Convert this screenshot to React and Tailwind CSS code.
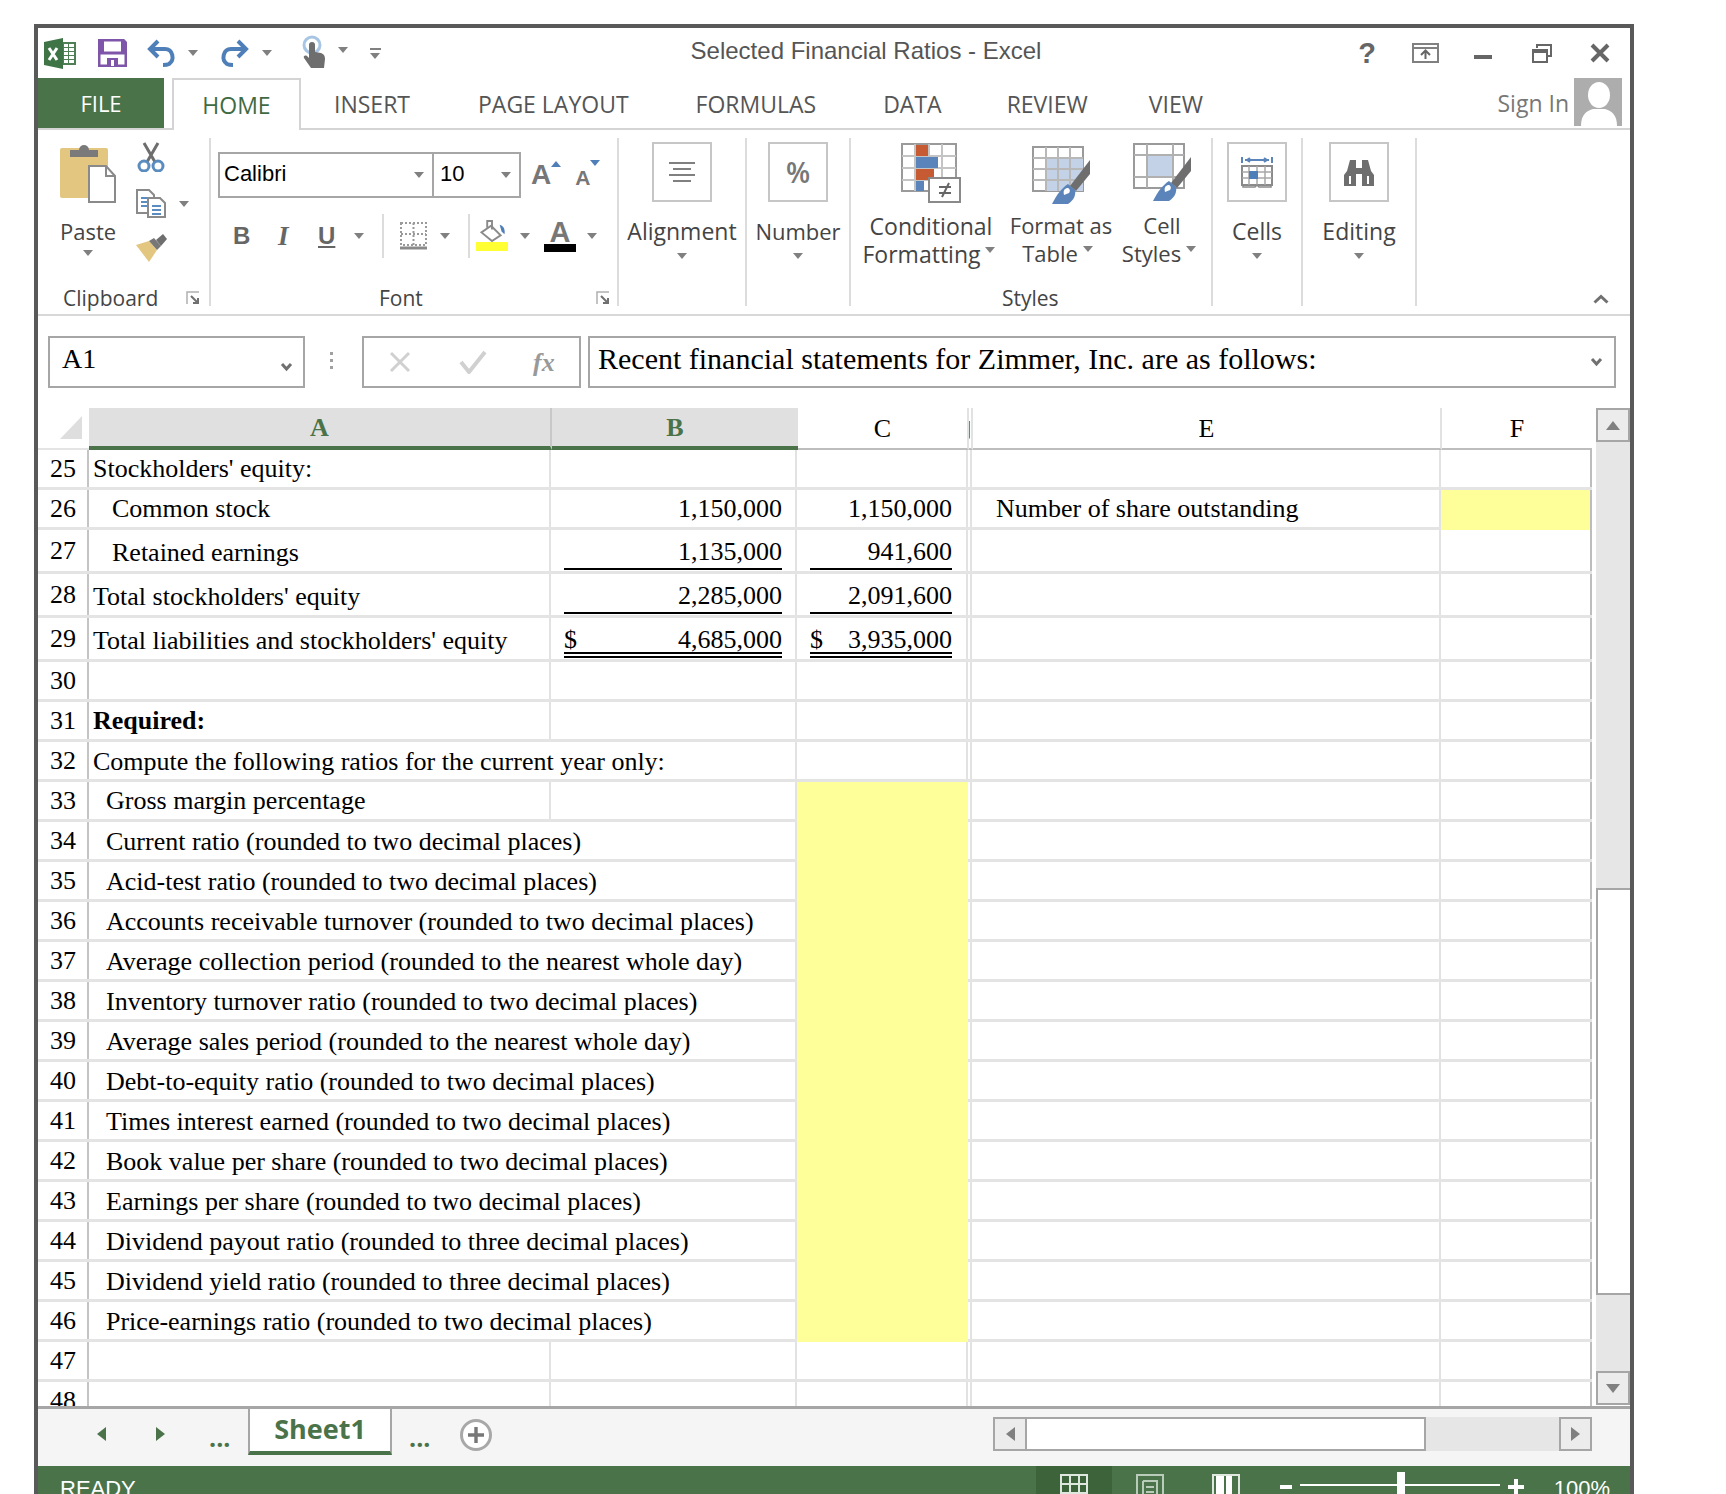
import React from "react";

const Caret = ({ up, className = "", color = "#808080" }) => (
  <svg viewBox="0 0 10 6" className={`w-[10px] h-[6px] shrink-0 ${className}`}>
    <polygon points={up ? "5,0 10,6 0,6" : "0,0 10,0 5,6"} fill={color} />
  </svg>
);

const Sep = () => <div className="w-[2px] my-[8px] bg-[#dcdcdc] shrink-0" />;

const Launcher = ({ className = "" }) => (
  <svg viewBox="0 0 14 14" className={`w-[14px] h-[14px] ${className}`}>
    <path d="M1 13V1h12" fill="none" stroke="#b0b0b0" strokeWidth="1.5" />
    <path d="M5 5l7 7M12 7v5H7" fill="none" stroke="#707070" strokeWidth="2" />
  </svg>
);

const GroupLabel = ({ text, className = "", launcher }) => (
  <div className={`mt-auto mb-[2px] h-[28px] flex items-center text-[21px] leading-[28px] ${className}`}>
    <span>{text}</span>
    {launcher}
  </div>
);

const ExcelLogo = () => (
  <svg viewBox="0 0 32 31" className="w-[32px] h-[31px]">
    <rect x="14" y="4" width="18" height="23" fill="#4f8055" />
    <g fill="#fff">
      <rect x="20" y="6" width="4" height="3" /><rect x="25" y="6" width="5" height="3" />
      <rect x="20" y="10" width="4" height="3" /><rect x="25" y="10" width="5" height="3" />
      <rect x="20" y="14" width="4" height="3" /><rect x="25" y="14" width="5" height="3" />
      <rect x="20" y="18" width="4" height="3" /><rect x="25" y="18" width="5" height="3" />
      <rect x="20" y="22" width="4" height="3" /><rect x="25" y="22" width="5" height="3" />
    </g>
    <polygon points="0,4 19,0 19,31 0,27" fill="#3f7446" />
    <path d="M5 10l8 12M13 10L5 22" stroke="#fff" strokeWidth="3" fill="none" />
  </svg>
);

const SaveIcon = () => (
  <svg viewBox="0 0 29 28" className="w-[29px] h-[28px]">
    <path d="M1 1h24l3 3v23H1z" fill="#fff" stroke="#7f55a9" strokeWidth="3" />
    <rect x="6" y="3" width="17" height="10" fill="#fff" />
    <path d="M2 14h25" stroke="#7f55a9" strokeWidth="3" />
    <rect x="2" y="2" width="4" height="12" fill="#7f55a9" />
    <rect x="23" y="2" width="4" height="12" fill="#7f55a9" />
    <path d="M9 27v-8h11v8" fill="#7f55a9" />
    <rect x="13" y="21" width="3" height="6" fill="#fff" />
  </svg>
);

const UndoIcon = ({ flip }) => (
  <svg viewBox="0 0 30 28" className={`w-[30px] h-[28px] ${flip ? "-scale-x-100" : ""}`}>
    <path
      d="M11 2L3 10l8 8M3 10h15c8 0 10 11 4 15-2 1-4 1-6 1"
      fill="none"
      stroke="#4f7fb8"
      strokeWidth="4"
    />
  </svg>
);

const TouchIcon = () => (
  <svg viewBox="0 0 24 33" className="w-[24px] h-[33px]">
    <circle cx="10" cy="10" r="8" fill="none" stroke="#a8c6e4" strokeWidth="3" />
    <path
      d="M7 10a3 3 0 0 1 6 0v7l6 1c3 1 4 3 4 6l-1 9H9L2 23c-1-2 1-3 3-2l2 2z"
      fill="#6e6e6e"
    />
  </svg>
);

const Customize = () => (
  <div className="flex flex-col items-center gap-[3px] w-[12px]">
    <div className="w-[11px] h-[2px] bg-[#808080]" />
    <Caret />
  </div>
);

const PinIcon = () => (
  <svg viewBox="0 0 27 20" className="w-[27px] h-[20px]">
    <rect x="1" y="1" width="25" height="18" fill="none" stroke="#808080" strokeWidth="2" />
    <path d="M1 5h25" stroke="#808080" strokeWidth="2" />
    <path d="M13.500 16V8M9 12l4.500-4.500L18 12" fill="none" stroke="#666" strokeWidth="2" />
  </svg>
);

const RestoreIcon = () => (
  <svg viewBox="0 0 20 19" className="w-[20px] h-[19px]">
    <path d="M5 4V1h14v11h-4" fill="none" stroke="#666" strokeWidth="2" />
    <rect x="1" y="6" width="14" height="12" fill="#fff" stroke="#666" strokeWidth="2" />
    <path d="M1 8h14" stroke="#666" strokeWidth="2" />
  </svg>
);

const CloseIcon = () => (
  <svg viewBox="0 0 20 20" className="w-[20px] h-[20px]">
    <path d="M2 2l16 16M18 2L2 18" stroke="#666" strokeWidth="4" />
  </svg>
);

const Avatar = () => (
  <svg viewBox="0 0 48 48" className="w-[48px] h-[48px] ml-[5px] shrink-0">
    <rect width="48" height="48" fill="#adadad" />
    <ellipse cx="25" cy="17" rx="11" ry="13" fill="#fff" />
    <path d="M7 48c0-12 6-15 12-17h12c6 2 12 5 12 17z" fill="#fff" />
  </svg>
);

const PasteIcon = () => (
  <svg viewBox="0 0 56 61" className="w-[56px] h-[61px]">
    <rect x="0" y="6" width="48" height="50" rx="2" fill="#e3c67f" />
    <path d="M10 8h28v7H10z" fill="#7a7a7a" />
    <path d="M19 8a5 5 0 0 1 10 0z" fill="#7a7a7a" />
    <path d="M29 24h17l9 10v26H29z" fill="#fff" stroke="#8a8a8a" strokeWidth="2" />
    <path d="M46 24v10h9" fill="none" stroke="#8a8a8a" strokeWidth="2" />
  </svg>
);

const ScissorsIcon = () => (
  <svg viewBox="0 0 30 30" className="w-[30px] h-[30px]">
    <path d="M8 1l11 19M22 1L11 20" stroke="#6e6e6e" strokeWidth="3" />
    <circle cx="8" cy="24" r="5" fill="none" stroke="#5b8cc0" strokeWidth="3" />
    <circle cx="22" cy="24" r="5" fill="none" stroke="#5b8cc0" strokeWidth="3" />
  </svg>
);

const CopyIcon = () => (
  <svg viewBox="0 0 30 29" className="w-[30px] h-[29px]">
    <path d="M1 1h12l5 5v18H1z" fill="#fff" stroke="#8a8a8a" strokeWidth="2" />
    <path d="M5 9h6M5 13h6M5 17h6" stroke="#5b8cc0" strokeWidth="2" />
    <path d="M12 9h12l5 5v14H12z" fill="#fff" stroke="#8a8a8a" strokeWidth="2" />
    <path d="M16 17h9M16 21h9M16 25h9" stroke="#5b8cc0" strokeWidth="2" />
  </svg>
);

const BrushIcon = () => (
  <svg viewBox="0 0 31 29" className="w-[31px] h-[29px]">
    <path d="M0 12L13 8l8 9-8 12z" fill="#e3c67f" />
    <path d="M13 8l5-3 7 8-4 4z" fill="#777" />
    <path d="M20 7l7-6 4 5-6 7z" fill="#6e6e6e" />
  </svg>
);

const BorderIcon = () => (
  <svg viewBox="0 0 27 28" className="w-[27px] h-[28px]">
    <path
      d="M1 1h25v22H1zM13.500 1v22M1 12h25"
      fill="none"
      stroke="#9a9a9a"
      strokeWidth="2"
      strokeDasharray="2 2"
    />
    <path d="M0 26h27" stroke="#8a8a8a" strokeWidth="3" />
  </svg>
);

const FillIcon = () => (
  <div className="flex flex-col items-center w-[32px]">
    <svg viewBox="0 0 32 24" className="w-[32px] h-[23px] -mt-[2px]">
      <path d="M15 7l10 10-9 6-11-9z" fill="#fff" stroke="#8a8a8a" strokeWidth="2" />
      <path d="M11 9V2h5v9" fill="none" stroke="#8a8a8a" strokeWidth="2" />
      <path d="M24 6c4 1 6 5 5 10l-3-3z" fill="#4f7fb8" />
    </svg>
    <div className="w-[32px] h-[9px] bg-[#ffff33]" />
  </div>
);

const ColorA = () => (
  <div className="flex flex-col items-center w-[32px]">
    <span className="[font-family:'Liberation_Sans',sans-serif] font-bold text-[29px] leading-[22px] h-[22px] text-[#777]">A</span>
    <div className="w-[32px] h-[8px] bg-black mt-[1px]" />
  </div>
);

const IconBox = ({ children }) => (
  <div className="w-[60px] h-[60px] border-2 border-[#c6c6c6] flex items-center justify-center shrink-0">
    {children}
  </div>
);

const AlignIcon = () => (
  <svg viewBox="0 0 28 22" className="w-[28px] h-[22px]">
    <path d="M1 2h26M5 8h18M1 14h26M5 20h18" stroke="#808080" strokeWidth="2" />
  </svg>
);

const CondIcon = () => (
  <svg viewBox="0 0 60 60" className="w-[60px] h-[60px]">
    <rect x="1" y="1" width="54" height="47" fill="#fff" stroke="#9a9a9a" strokeWidth="2" />
    <path d="M14 1v47M28 1v47M41 1v47M1 13h54M1 25h54M1 37h54" stroke="#c4c4c4" strokeWidth="2" />
    <rect x="15" y="2" width="12" height="11" fill="#c55a33" />
    <rect x="15" y="14" width="22" height="11" fill="#5b84ba" />
    <rect x="15" y="26" width="18" height="11" fill="#c55a33" />
    <rect x="15" y="38" width="8" height="10" fill="#5b84ba" />
    <rect x="28" y="35" width="31" height="24" fill="#fff" stroke="#8a8a8a" strokeWidth="2" />
    <path d="M38 44h12M38 50h12M41 54l7-14" stroke="#666" strokeWidth="2" fill="none" />
  </svg>
);

const TableIcon = ({ cell }) => (
  <svg viewBox="0 0 58 58" className="w-[58px] h-[58px]">
    <rect x="1" y="1" width="50" height="44" fill="#fff" stroke="#9a9a9a" strokeWidth="2" />
    {cell ? (
      <>
        <rect x="14" y="12" width="26" height="22" fill="#c3d2e7" />
        <path d="M14 1v44M40 1v44M1 12h50M1 34h50" stroke="#b0b0b0" strokeWidth="2" />
      </>
    ) : (
      <>
        <rect x="14" y="12" width="37" height="33" fill="#c3d2e7" />
        <path d="M14 1v44M26 1v44M38 1v44M1 12h50M1 23h50M1 34h50" stroke="#b8b8b8" strokeWidth="2" />
      </>
    )}
    <path d="M58 14L38 40l6 5 14-17z" fill="#6e6e6e" />
    <path d="M36 38c-6 4-11 10-16 20h16c6-4 8-9 7-14z" fill="#5b84ba" />
    <path d="M35 42c-3 1-4 3-3 7l5-2c2-3 0-5-2-5z" fill="#fff" />
  </svg>
);

const CellsIcon = () => (
  <svg viewBox="0 0 32 32" className="w-[32px] h-[32px]">
    <path d="M4 4h24" stroke="#5b84ba" strokeWidth="2" />
    <path d="M1 1v6M31 1v6M9 2l-3 2 3 2M23 2l3 2-3 2" stroke="#5b84ba" strokeWidth="2" fill="none" />
    <rect x="1" y="10" width="30" height="19" fill="#fff" stroke="#8a8a8a" strokeWidth="2" />
    <path d="M8 10v19M16 10v19M24 10v19M1 16h30M1 22h30" stroke="#a8a8a8" strokeWidth="1.500" />
    <rect x="8" y="15" width="9" height="8" fill="#4f7fb8" />
    <path d="M2 29v2h12l2-2 2 2h12v-2" fill="none" stroke="#8a8a8a" strokeWidth="1.500" />
  </svg>
);

const BinocularsIcon = () => (
  <svg viewBox="0 0 30 28" className="w-[30px] h-[28px]">
    <path
      d="M6 2h6v8h6V2h6l3 11 3 4v11H18V16h-6v12H0V17l3-4z"
      fill="#6e6e6e"
    />
    <rect x="5" y="18" width="2" height="8" fill="#fff" />
    <rect x="23" y="18" width="2" height="8" fill="#fff" />
  </svg>
);

const Chevron = ({ className = "" }) => (
  <svg viewBox="0 0 12 10" className={`w-[13px] h-[10px] ${className}`}>
    <path d="M1.500 2L6 7l4.500-5" fill="none" stroke="#707070" strokeWidth="3" />
  </svg>
);

const Arrow = ({ dir, className = "", color = "#808080" }) => {
  const points = {
    up: "7,0 14,9 0,9",
    down: "0,0 14,0 7,9",
    left: "9,0 9,14 0,7",
    right: "0,0 0,14 9,7",
  };
  const isV = dir === "up" || dir === "down";
  return (
    <svg viewBox={isV ? "0 0 14 9" : "0 0 9 14"} className={`${isV ? "w-[14px] h-[9px]" : "w-[9px] h-[14px]"} ${className}`}>
      <polygon points={points[dir]} fill={color} />
    </svg>
  );
};

const tabs = [
  { label: "INSERT", cls: "ml-[33px]" },
  { label: "PAGE LAYOUT", cls: "ml-[68px]" },
  { label: "FORMULAS", cls: "ml-[67px]" },
  { label: "DATA", cls: "ml-[67px]" },
  { label: "REVIEW", cls: "ml-[65px]" },
  { label: "VIEW", cls: "ml-[61px]" },
];

const lineCell = "border-r-2 border-[#e2e2e2]";

const Row = ({ num, h = "h-[40px]", a, bold, indent = "pl-[4px]", wide, b, c, e, dollar, line, cDollar, yellowC, yellowF }) => {
  const numBox = line ? `h-[40px] items-start pt-[7px] ${line === "double" ? "border-b-[6px] border-double border-black" : "border-b-2 border-black"}` : "h-full items-center";
  const tall = h === "h-[44px]";
  return (
    <div className={`flex ${h} border-b-[3px] border-[#e4e4e4] shrink-0`}>
      <div className="w-[51px] pl-[1px] border-r-2 border-[#c4c4c4] flex items-center justify-center shrink-0">{num}</div>
      <div className={`${wide ? "w-[708px] pt-[2px]" : "w-[462px]"} ${lineCell} ${tall ? "pt-[4px]" : ""} ${indent} flex items-center whitespace-nowrap shrink-0 ${bold ? "font-bold" : ""}`}>
        {a}
      </div>
      {!wide && (
        <div className={`w-[246px] ${lineCell} pl-[13px] pr-[13px] shrink-0`}>
          {b && (
            <div className={`flex justify-between leading-[30px] ${numBox}`}>
              <span>{dollar}</span>
              <span>{b}</span>
            </div>
          )}
        </div>
      )}
      <div className={`w-[171px] pl-[13px] pr-[14px] shrink-0 ${yellowC ? "bg-[#ffff99] -mb-[3px]" : lineCell}`}>
        {c && (
          <div className={`flex justify-between leading-[30px] ${numBox}`}>
            <span>{cDollar}</span>
            <span>{c}</span>
          </div>
        )}
      </div>
      <div className={`w-[4px] ${lineCell} shrink-0`} />
      <div className={`w-[469px] ${lineCell} pl-[24px] flex items-center shrink-0`}>{e}</div>
      <div className={`flex-1 border-r-2 border-[#bdbdbd] ${yellowF ? "bg-[#ffff99] -mb-[3px]" : ""}`} />
    </div>
  );
};

const ratios = [
  [34, "Current ratio (rounded to two decimal places)"],
  [35, "Acid-test ratio (rounded to two decimal places)"],
  [36, "Accounts receivable turnover (rounded to two decimal places)"],
  [37, "Average collection period (rounded to the nearest whole day)"],
  [38, "Inventory turnover ratio (rounded to two decimal places)"],
  [39, "Average sales period (rounded to the nearest whole day)"],
  [40, "Debt-to-equity ratio (rounded to two decimal places)"],
  [41, "Times interest earned (rounded to two decimal places)"],
  [42, "Book value per share (rounded to two decimal places)"],
  [43, "Earnings per share (rounded to two decimal places)"],
  [44, "Dividend payout ratio (rounded to three decimal places)"],
  [45, "Dividend yield ratio (rounded to three decimal places)"],
  [46, "Price-earnings ratio (rounded to two decimal places)"],
];

const Sheet = () => (
  <div className="flex h-[999px] overflow-hidden shrink-0">
    <div className="w-[1554px] shrink-0 [font-family:'Liberation_Serif',serif] text-[26px] text-black">
      <div className="flex h-[42px] relative">
        <div className="w-[51px] flex items-center justify-end pr-[7px] pb-[1px] border-b-2 border-[#e4e4e4]">
          <svg viewBox="0 0 22 23" className="w-[22px] h-[23px]">
            <polygon points="22,0 22,23 0,23" fill="#dedede" />
          </svg>
        </div>
        <div className="w-[463px] bg-[#e0e0e0] border-b-4 border-[#4a7349] border-r-2 border-r-[#c8c8c8] flex items-center justify-center font-bold text-[#4a7349]">A</div>
        <div className="w-[246px] bg-[#e0e0e0] border-b-4 border-[#4a7349] flex items-center justify-center font-bold text-[#4a7349]">B</div>
        <div className="w-[171px] border-b-2 border-[#bdbdbd] border-r-2 border-r-[#e2e2e2] flex items-center justify-center">C</div>
        <div className="w-[4px] border-b-2 border-[#bdbdbd] border-r-2 border-r-[#e2e2e2] flex items-center justify-end overflow-hidden text-[20px]">]</div>
        <div className="w-[469px] border-b-2 border-[#bdbdbd] border-r-2 border-r-[#e2e2e2] flex items-center justify-center">E</div>
        <div className="flex-1 border-b-2 border-[#bdbdbd] flex items-center justify-center">F</div>
      </div>
      <Row num={25} a="Stockholders' equity:" />
      <Row num={26} a="Common stock" indent="pl-[23px]" b="1,150,000" c="1,150,000" e="Number of share outstanding" yellowF />
      <Row num={27} h="h-[44px]" a="Retained earnings" indent="pl-[23px]" b="1,135,000" c="941,600" line="single" />
      <Row num={28} h="h-[44px]" a="Total stockholders' equity" b="2,285,000" c="2,091,600" line="single" />
      <Row num={29} h="h-[44px]" a="Total liabilities and stockholders' equity" b="4,685,000" c="3,935,000" dollar="$" cDollar="$" line="double" />
      <Row num={30} />
      <Row num={31} a="Required:" bold />
      <Row num={32} a="Compute the following ratios for the current year only:" wide />
      <Row num={33} a="Gross margin percentage" indent="pl-[17px]" yellowC />
      {ratios.map(([num, text]) => (
        <Row key={num} num={num} a={text} indent="pl-[17px]" wide yellowC />
      ))}
      <Row num={47} />
      <Row num={48} />
    </div>
    <div className="w-[4px] shrink-0" />
    <div className="w-[34px] bg-[#e6e6e6] flex flex-col shrink-0 h-[997px]">
      <div className="h-[34px] border-2 border-[#a6a6a6] flex items-center justify-center bg-[#ececec]">
        <Arrow dir="up" />
      </div>
      <div className="h-[407px] mt-[446px] bg-white border-2 border-[#a6a6a6] border-r-0" />
      <div className="h-[34px] mt-[76px] border-2 border-[#a6a6a6] flex items-center justify-center bg-[#ececec]">
        <Arrow dir="down" />
      </div>
    </div>
  </div>
);

export default function App() {
  return (
    <div className="w-[1726px] h-[1494px] bg-white overflow-hidden pl-[34px] pt-[24px] [font-family:'Open_Sans',sans-serif] text-[#444]">
      <div className="w-[1600px] h-[1480px] border-x-4 border-t-4 border-[#595959] flex flex-col">
        {/* title bar */}
        <div className="h-[50px] flex items-center relative shrink-0">
          <div className="ml-[6px]"><ExcelLogo /></div>
          <div className="ml-[22px]"><SaveIcon /></div>
          <div className="ml-[20px]"><UndoIcon /></div>
          <Caret className="ml-[11px]" />
          <div className="ml-[21px]"><UndoIcon flip /></div>
          <Caret className="ml-[13px]" />
          <div className="ml-[30px] -mt-[4px]"><TouchIcon /></div>
          <Caret className="ml-[12px] -mt-[6px]" />
          <div className="ml-[21px]"><Customize /></div>
          <div className="absolute left-[64px] right-0 top-[8px] text-center [font-family:'Liberation_Sans',sans-serif] text-[24px] leading-[30px] text-[#555]">
            Selected Financial Ratios - Excel
          </div>
          <div className="ml-auto flex items-center pr-[20px] text-[#666]">
            <span className="[font-family:'Liberation_Sans',sans-serif] font-bold text-[29px] leading-[30px]">?</span>
            <div className="ml-[36px]"><PinIcon /></div>
            <div className="ml-[35px] mt-[8px] w-[18px] h-[4px] bg-[#666]" />
            <div className="ml-[40px]"><RestoreIcon /></div>
            <div className="ml-[38px]"><CloseIcon /></div>
          </div>
        </div>

        {/* ribbon tabs */}
        <div className="h-[52px] flex items-stretch border-b-2 border-[#d4d4d4] shrink-0 text-[23px] text-[#555] whitespace-nowrap">
          <div className="w-[126px] h-[50px] bg-[#4a7349] text-white text-[22px] flex items-center justify-center">FILE</div>
          <div className="ml-[8px] w-[129px] h-[52px] border-2 border-b-0 border-[#d4d4d4] bg-white flex items-center justify-center text-[#3f6b43]">HOME</div>
          {tabs.map((t) => (
            <div key={t.label} className={`${t.cls} pt-[3px] flex items-center`}>{t.label}</div>
          ))}
          <div className="ml-auto flex items-start pr-[8px]">
            <span className="text-[23px] leading-[50px] text-[#777]">Sign In</span>
            <Avatar />
          </div>
        </div>

        {/* ribbon */}
        <div className="h-[186px] flex border-b-2 border-[#d8d8d8] shrink-0">
          <div className="w-[171px] flex flex-col shrink-0">
            <div className="flex pl-[22px] pt-[12px]">
              <div className="w-[56px] flex flex-col items-center">
                <PasteIcon />
                <div className="mt-[14px] text-[22px] leading-[28px]">Paste</div>
                <Caret className="mt-[5px]" />
              </div>
              <div className="ml-[20px] flex flex-col">
                <ScissorsIcon />
                <div className="mt-[17px] flex items-center">
                  <CopyIcon />
                  <Caret className="ml-[13px]" />
                </div>
                <div className="mt-[15px]"><BrushIcon /></div>
              </div>
            </div>
            <GroupLabel text="Clipboard" className="pl-[25px]" launcher={<Launcher className="ml-auto mr-[9px]" />} />
          </div>
          <Sep />
          <div className="w-[406px] flex flex-col shrink-0">
            <div className="flex items-center pl-[7px] pt-[22px]">
              <div className="w-[216px] h-[46px] border-2 border-[#a6a6a6] flex items-center justify-between pl-[4px] pr-[8px] pb-[4px] [font-family:'Liberation_Sans',sans-serif] text-[22px] text-black">
                Calibri
                <Caret className="mt-[4px]" />
              </div>
              <div className="w-[87px] h-[46px] border-2 border-l-0 border-[#a6a6a6] flex items-center justify-between pl-[6px] pr-[8px] pb-[4px] [font-family:'Liberation_Sans',sans-serif] text-[22px] text-black">
                10
                <Caret className="mt-[4px]" />
              </div>
              <div className="ml-[10px] flex items-start [font-family:'Liberation_Sans',sans-serif] font-bold text-[#777]">
                <span className="text-[28px] leading-[30px]">A</span>
                <Caret up color="#4f7fb8" className="mt-[1px]" />
                <span className="ml-[14px] mt-[6px] text-[21px] leading-[24px]">A</span>
                <Caret color="#4f7fb8" />
              </div>
            </div>
            <div className="flex items-center pl-[22px] mt-[16px] h-[44px] text-[#666]">
              <span className="w-[15px] [font-family:'Liberation_Sans',sans-serif] font-bold text-[24px]">B</span>
              <span className="ml-[30px] w-[14px] [font-family:'Liberation_Serif',serif] italic font-bold text-[27px]">I</span>
              <span className="ml-[26px] w-[18px] [font-family:'Liberation_Sans',sans-serif] font-bold text-[24px] underline">U</span>
              <Caret className="ml-[18px]" />
              <div className="ml-[18px] w-[2px] h-[44px] bg-[#dcdcdc]" />
              <div className="ml-[16px]"><BorderIcon /></div>
              <Caret className="ml-[13px]" />
              <div className="ml-[18px] w-[2px] h-[44px] bg-[#dcdcdc]" />
              <div className="ml-[6px]"><FillIcon /></div>
              <Caret className="ml-[12px]" />
              <div className="ml-[14px]"><ColorA /></div>
              <Caret className="ml-[11px]" />
            </div>
            <GroupLabel text="Font" className="pl-[168px]" launcher={<Launcher className="ml-auto mr-[7px]" />} />
          </div>
          <Sep />
          <div className="w-[126px] flex flex-col items-center pt-[12px] shrink-0">
            <IconBox><AlignIcon /></IconBox>
            <div className="mt-[15px] text-[23px] leading-[28px]">Alignment</div>
            <Caret className="mt-[8px]" />
          </div>
          <Sep />
          <div className="w-[102px] flex flex-col items-center pt-[12px] shrink-0">
            <IconBox>
              <span className="text-[28px] font-semibold text-[#777]">%</span>
            </IconBox>
            <div className="mt-[15px] text-[22px] leading-[28px]">Number</div>
            <Caret className="mt-[8px]" />
          </div>
          <Sep />
          <div className="w-[360px] flex flex-col shrink-0">
            <div className="flex pt-[13px] pl-[9px] text-[22px] leading-[28px] text-center">
              <div className="w-[142px] flex flex-col items-center text-[23px]">
                <CondIcon />
                <div className="mt-[9px]">Conditional</div>
                <div className="flex items-center mr-[4px]">Formatting<Caret className="ml-[5px] -mt-[8px]" /></div>
              </div>
              <div className="w-[118px] flex flex-col items-center">
                <div className="h-[60px] pt-[3px]"><TableIcon /></div>
                <div className="mt-[8px]">Format as</div>
                <div className="flex items-center mr-[7px]">Table<Caret className="ml-[5px] -mt-[8px]" /></div>
              </div>
              <div className="w-[84px] flex flex-col items-center">
                <TableIcon cell />
                <div className="mt-[10px]">Cell</div>
                <div className="flex items-center mr-[6px]">Styles<Caret className="ml-[5px] -mt-[8px]" /></div>
              </div>
            </div>
            <GroupLabel text="Styles" className="pl-[151px]" />
          </div>
          <Sep />
          <div className="w-[88px] flex flex-col items-center pt-[12px] shrink-0">
            <IconBox><CellsIcon /></IconBox>
            <div className="mt-[15px] text-[23px] leading-[28px]">Cells</div>
            <Caret className="mt-[8px]" />
          </div>
          <Sep />
          <div className="w-[112px] flex flex-col items-center pt-[12px] shrink-0">
            <IconBox><BinocularsIcon /></IconBox>
            <div className="mt-[15px] text-[23px] leading-[28px]">Editing</div>
            <Caret className="mt-[8px]" />
          </div>
          <Sep />
          <div className="flex-1 flex items-end justify-end pr-[21px] pb-[10px]">
            <svg viewBox="0 0 16 10" className="w-[16px] h-[10px]">
              <path d="M1.500 8.500L8 2.500l6.500 6" fill="none" stroke="#707070" strokeWidth="3" />
            </svg>
          </div>
        </div>

        {/* formula bar */}
        <div className="h-[92px] pt-[20px] pl-[10px] flex items-start shrink-0 [font-family:'Liberation_Serif',serif] text-[28px] text-black">
          <div className="w-[257px] h-[52px] border-2 border-[#a6a6a6] flex items-center pl-[12px] pr-[10px] pb-[6px] justify-between">
            A1
            <Chevron className="mt-[16px]" />
          </div>
          <div className="ml-[25px] mt-[16px] flex flex-col gap-[4px]">
            <div className="w-[3px] h-[3px] bg-[#a0a0a0]" />
            <div className="w-[3px] h-[3px] bg-[#a0a0a0]" />
            <div className="w-[3px] h-[3px] bg-[#a0a0a0]" />
          </div>
          <div className="ml-[29px] w-[219px] h-[52px] border-2 border-[#a6a6a6] flex items-center pl-[25px]">
            <svg viewBox="0 0 22 22" className="w-[22px] h-[22px]">
              <path d="M2 2l18 18M20 2L2 20" stroke="#d0d0d0" strokeWidth="3" />
            </svg>
            <svg viewBox="0 0 28 24" className="ml-[48px] w-[28px] h-[24px]">
              <path d="M2 12l8 10L26 2" fill="none" stroke="#d0d0d0" strokeWidth="4" />
            </svg>
            <span className="ml-[46px] italic font-bold text-[26px] text-[#999]">fx</span>
          </div>
          <div className="ml-[7px] w-[1028px] h-[52px] border-2 border-[#a6a6a6] flex items-center justify-between pl-[8px] pr-[11px] pb-[7px] text-[30px]">
            Recent financial statements for Zimmer, Inc. are as follows:
            <Chevron className="mt-[6px]" />
          </div>
        </div>

        <Sheet />

        {/* sheet tabs */}
        <div className="h-[60px] -mt-[1px] border-t-[3px] border-[#a6a6a6] bg-[#f5f5f5] flex shrink-0">
          <Arrow dir="left" color="#4a7349" className="ml-[59px] mt-[18px]" />
          <Arrow dir="right" color="#4a7349" className="ml-[50px] mt-[18px]" />
          <span className="ml-[44px] w-[22px] mt-[14px] font-bold text-[25px] leading-[28px] text-[#4a7349]">...</span>
          <div className="ml-[17px] w-[144px] h-[46px] bg-white border-x-2 border-[#a6a6a6] border-b-4 border-b-[#4a7349] flex items-center justify-center pb-[2px] text-[27px] font-bold text-[#4a7349]">
            Sheet1
          </div>
          <span className="ml-[17px] w-[22px] mt-[14px] font-bold text-[25px] leading-[28px] text-[#4a7349]">...</span>
          <div className="ml-[29px] mt-[10px] w-[32px] h-[32px] rounded-full border-[3px] border-[#a8a8a8] bg-white flex items-center justify-center">
            <svg viewBox="0 0 14 14" className="w-[16px] h-[16px]">
              <path d="M7 0v14M0 7h14" stroke="#777" strokeWidth="3" />
            </svg>
          </div>
          <div className="ml-[501px] mt-[8px] w-[599px] h-[34px] flex bg-[#e6e6e6]">
            <div className="w-[34px] border-2 border-[#a6a6a6] flex items-center justify-center bg-[#ececec]"><Arrow dir="left" /></div>
            <div className="w-[399px] bg-white border-2 border-l-0 border-[#a6a6a6]" />
            <div className="w-[133px]" />
            <div className="w-[33px] border-2 border-[#a6a6a6] flex items-center justify-center bg-[#ececec]"><Arrow dir="right" /></div>
          </div>
        </div>

        {/* status bar */}
        <div className="h-[40px] bg-[#4a7349] flex items-start text-white text-[22px] [font-family:'Liberation_Sans',sans-serif] shrink-0">
          <span className="ml-[22px] mt-[8px] leading-[30px]">READY</span>
          <div className="ml-auto w-[76px] h-[40px] bg-[#3c6339] flex justify-center pt-[8px]">
            <svg viewBox="0 0 28 30" className="w-[28px] h-[30px]">
              <path d="M1 1h26v28H1zM10 1v28M19 1v28M1 10h26M1 19h26" fill="none" stroke="#dfe8df" strokeWidth="2" />
            </svg>
          </div>
          <svg viewBox="0 0 28 30" className="ml-[24px] mt-[8px] w-[28px] h-[30px]">
            <rect x="1" y="1" width="26" height="28" fill="none" stroke="#b9cbb9" strokeWidth="2" />
            <path d="M7 7h14v22M7 7v22M10 13h8M10 18h8M10 23h8" fill="none" stroke="#b9cbb9" strokeWidth="2" />
          </svg>
          <svg viewBox="0 0 28 30" className="ml-[48px] mt-[8px] w-[28px] h-[30px]">
            <rect x="1" y="1" width="26" height="28" fill="none" stroke="#dfe8df" strokeWidth="2" />
            <rect x="4" y="2" width="8" height="20" fill="#fff" />
            <rect x="14" y="2" width="6" height="20" fill="#fff" />
          </svg>
          <div className="ml-[40px] mt-[19px] w-[12px] h-[4px] bg-white" />
          <div className="ml-[8px] mt-[18px] w-[200px] h-[2px] bg-white relative">
            <div className="absolute left-[97px] -top-[12px] w-[8px] h-[26px] bg-white" />
          </div>
          <svg viewBox="0 0 16 16" className="ml-[8px] mt-[13px] w-[16px] h-[16px]">
            <path d="M8 0v16M0 8h16" stroke="#fff" strokeWidth="4" />
          </svg>
          <span className="ml-[30px] mr-[20px] mt-[8px] leading-[30px]">100%</span>
        </div>
      </div>
    </div>
  );
}
